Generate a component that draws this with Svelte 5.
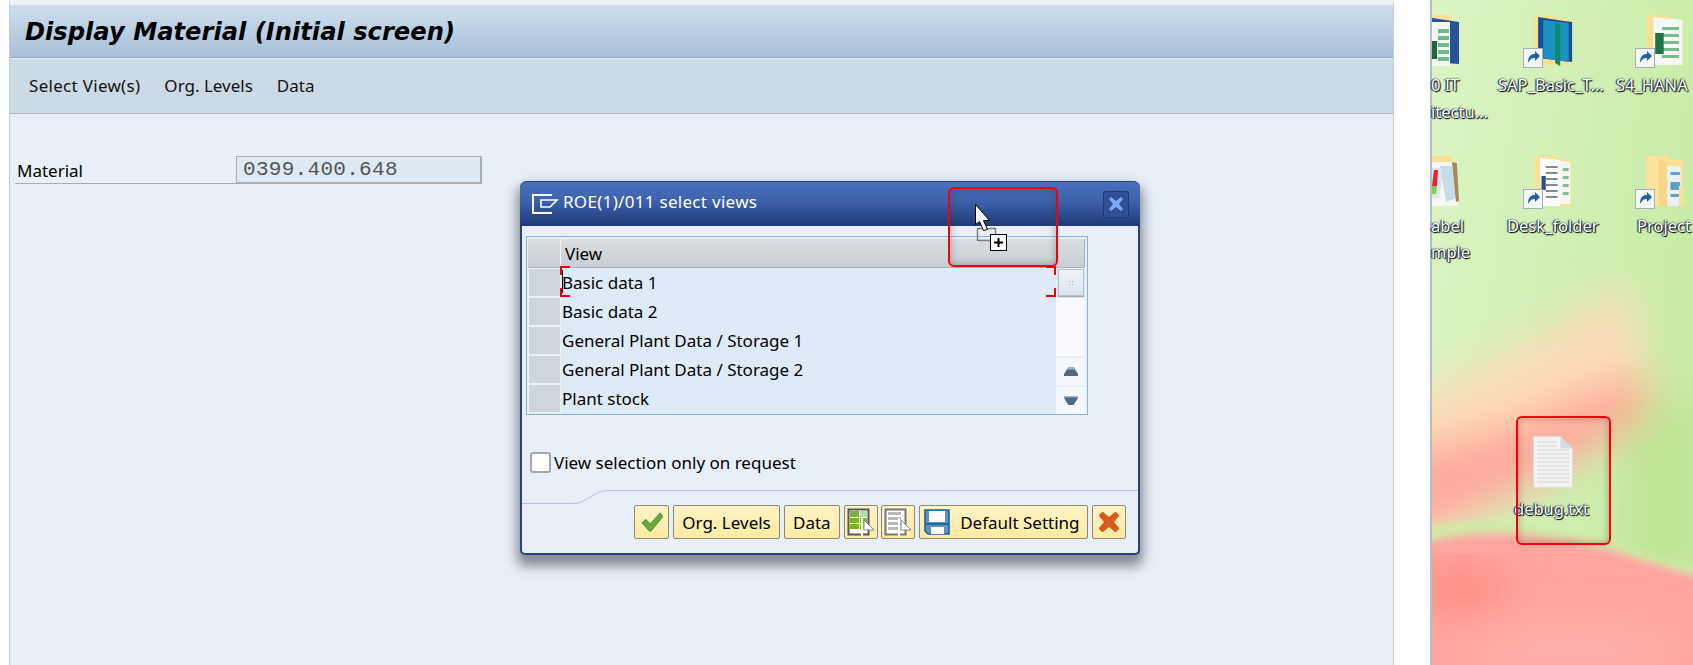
<script>
	const rows = ['Basic data 1', 'Basic data 2', 'General Plant Data / Storage 1', 'General Plant Data / Storage 2', 'Plant stock'];

	const shortcuts = [
		{ kind: 'blue', x: 1523, y: 15 },
		{ kind: 'excel', x: 1635, y: 15 },
		{ kind: 'docs', x: 1523, y: 156 },
		{ kind: 'plain', x: 1635, y: 156 }
	];

	const labels = [
		{ text: '0 IT', x: 1431, y: 73 },
		{ text: 'itectu...', x: 1431, y: 100 },
		{ text: 'SAP_Basic_T...', x: 1498, y: 73 },
		{ text: 'S4_HANA', x: 1616, y: 73 },
		{ text: 'abel', x: 1431, y: 214 },
		{ text: 'mple', x: 1431, y: 240 },
		{ text: 'Desk_folder', x: 1507, y: 214 },
		{ text: 'Project', x: 1637, y: 214 },
		{ text: 'debug.txt', x: 1514, y: 497 }
	];
</script>

{#snippet arrow()}
	<rect x="0.5" y="33.500" width="19" height="19" fill="#f4f6f9" stroke="#a9adb3" />
	<path d="M5 48c0-7 3-9 7-9v-3l5 5-5 5v-3c-3 0-5 1-7 5z" fill="#23609f" />
{/snippet}

<div class="page">
	<div class="left-strip"></div>

	<main class="sap">
		<header class="title-bar"><h1>Display Material (Initial screen)</h1></header>
		<nav class="toolbar">
			<span class="first">Select View(s)</span>
			<span>Org. Levels</span>
			<span>Data</span>
		</nav>
		<section class="content">
			<div class="field">
				<label for="material">Material</label>
				<input id="material" value="0399.400.648" readonly />
			</div>
		</section>
	</main>

	<div class="right-strip"></div>

	<aside class="desktop">
		<svg class="wallpaper" viewBox="0 0 262 665" preserveAspectRatio="none">
			<defs>
				<filter id="blur-lg"><feGaussianBlur stdDeviation="20" /></filter>
				<filter id="blur-sm"><feGaussianBlur stdDeviation="4" /></filter>
				<linearGradient id="sky" x1="0" y1="0" x2="1" y2="0.3">
					<stop offset="0" stop-color="#dcf4c4" />
					<stop offset="1" stop-color="#c9eba8" />
				</linearGradient>
			</defs>
			<rect width="262" height="665" fill="url(#sky)" />
			<g filter="url(#blur-lg)">
				<rect x="190" y="400" width="92" height="180" fill="#bfe596" />
				<path d="M-30 400 C50 370 110 330 200 285 L220 400 C160 450 80 490 20 540 L-30 560z" fill="#fbdcb8" />
				<path d="M-30 450 C50 440 120 410 190 375 L210 420 C130 470 60 510 -30 540z" fill="#ffa89c" />
				<circle cx="205" cy="395" r="16" fill="#fcb088" />
			</g>
			<path d="M-10 528 C50 515 110 520 190 545 C220 556 245 564 272 570 V580 H-10z" fill="#cfeaa6" filter="url(#blur-sm)" />
			<path d="M-10 543 C50 528 110 531 190 553 C220 563 245 571 272 578 V675 H-10z" fill="#ffa4a0" filter="url(#blur-sm)" />
			<g filter="url(#blur-lg)">
				<ellipse cx="30" cy="590" rx="50" ry="25" fill="#ff8f84" />
				<ellipse cx="140" cy="650" rx="120" ry="25" fill="#ffb0aa" />
			</g>
		</svg>
	</aside>

	<!-- desktop icons sit on a free canvas, the two left ones are cut by the window -->
	<svg class="icon" style="left:1432px;top:15px" width="28" height="52" viewBox="0 0 28 52">
		<path d="M0 0h20v8H0z" fill="#fbdf93" />
		<path d="M0 3l27 4v42L0 47z" fill="#27509f" />
		<path d="M0 7h18v44H0z" fill="#f3f6f1" />
		<path d="M6 14h11v4H6zM6 21h11v4H6zM6 28h11v4H6zM6 35h11v4H6zM6 42h11v4H6z" fill="#71b88e" />
		<rect x="0" y="26" width="5" height="18" fill="#20683a" />
	</svg>

	<svg class="icon" style="left:1432px;top:156px" width="28" height="50" viewBox="0 0 28 50">
		<path d="M0 0h20v6H0z" fill="#fbdf93" />
		<path d="M0 6h26v44H0z" fill="#f6f6f4" />
		<path d="M0 12h8l3 6-4 24H0z" fill="#d9e6ee" />
		<path d="M2 14h4l-1 16H0z" fill="#e8262a" />
		<path d="M0 30h5l-1 8H0z" fill="#8ccb46" />
		<path d="M8 10l12 0 4 32-10 4z" fill="#c6dce8" />
		<path d="M20 6l5 1 2 38-3 1z" fill="#a78a58" />
	</svg>

	{#each shortcuts as s}
		<svg class="icon" style="left:{s.x}px;top:{s.y}px" width="60" height="54" viewBox="0 0 60 54">
			<g transform="translate(10 0) scale(.85 1)">
				<path d="M2 0h26l3 4h14v46H2z" fill="#fbdf93" />
				{#if s.kind === 'blue'}
					<path d="M6 2l30 4 10 1v40l-40-4z" fill="#1d4c9b" />
					<path d="M12 5l30 3v39l-30-4z" fill="#1a92c4" />
					<path d="M26 8l6 1v42l-6-3z" fill="#0d8a6a" />
				{:else if s.kind === 'excel'}
					<path d="M10 2l34 3v45H10z" fill="#f6f7f3" />
					<path d="M20 12h20v3H20zM20 19h20v3H20zM20 26h20v3H20zM20 33h20v3H20zM20 40h20v3H20z" fill="#78bb90" />
					<rect x="12" y="18" width="10" height="21" fill="#1f7244" />
				{:else if s.kind === 'docs'}
					<path d="M18 4l26 2v42H24z" fill="#f4f6f2" />
					<path d="M8 2l24 2v46H10z" fill="#fff" />
					<path d="M35 12h7v3h-7zM35 20h7v3h-7zM35 28h7v3h-7zM35 36h7v3h-7z" fill="#82bd96" />
					<path d="M15 10h14v2H15zM15 16h14v2H15zM15 22h14v2H15zM15 28h14v2H15zM15 34h14v2H15zM15 40h14v2H15z" fill="#7f8a99" />
					<rect x="10" y="20" width="5" height="14" fill="#2b4f95" />
				{:else}
					<path d="M26 10h16v40H26z" fill="#e9f1f4" />
					<path d="M30 16h11v3H30zM30 26h11v8H30zM30 38h11v3H30z" fill="#5ba0c8" />
					<path d="M2 0h14l8 6v44H2z" fill="#fce29d" />
					<path d="M16 2l10 5v43H16z" fill="#f7d689" />
					<path d="M40 30l6 2v18H40z" fill="#fbdf93" />
				{/if}
			</g>
			{@render arrow()}
		</svg>
	{/each}

	<svg class="icon" style="left:1533px;top:436px" width="40" height="52" viewBox="0 0 40 52">
		<path d="M.5.5h27l12 12v39H.5z" fill="#f3f3f3" stroke="#dcdcdc" />
		<path d="M27.500.5v12h12z" fill="#d8dadd" />
		<path d="M4 6h20M4 10h20M4 14h32M4 18h32M4 22h32M4 26h32M4 30h32M4 34h32M4 38h32M4 42h32M4 46h32" stroke="#cfd2d6" />
	</svg>

	{#each labels as l}
		<span class="desk-label" style="left:{l.x}px;top:{l.y}px">{l.text}</span>
	{/each}

	<div class="mark debug-mark"></div>

	<!-- popup window -->
	<div class="dialog">
		<div class="dlg-title">
			<svg width="27" height="20" viewBox="0 0 27 20" fill="none" stroke="#fff" stroke-width="2">
				<path d="M20 1H1v18h19" />
				<path d="M9 6v7h9l7-7z" stroke-width="1.6" />
			</svg>
			<span>ROE(1)/011 select views</span>
			<button class="close" aria-label="Close">
				<svg width="16" height="16" viewBox="0 0 16 16"><path d="M1 3l2-2 5 4 5-4 2 2-4 5 4 5-2 2-5-4-5 4-2-2 4-5z" fill="#7fa8f6" /></svg>
			</button>
		</div>

		<div class="dlg-body">
			<div class="table">
				<div class="head-row">
					<div class="corner"></div>
					<div class="col-head">View</div>
					<div class="head-end"></div>
				</div>
				<div class="table-main">
					<div class="rows">
						{#each rows as row}
							<div class="row">
								<div class="selector"></div>
								<div class="cell">{row}</div>
							</div>
						{/each}
					</div>
					<div class="scrollbar">
						<div class="thumb"><span></span></div>
						<div class="track"></div>
						<div class="sbtn"><svg width="14" height="9" viewBox="0 0 14 9"><path d="M4.500 0h5L14 7v2H0V7z" fill="#52687c" /><path d="M4.500 0h5L11 2.500H3z" fill="#a7b4c0" /></svg></div>
						<div class="sbtn"><svg width="14" height="9" viewBox="0 0 14 9"><path d="M0 0h14v2L9.500 9h-5L0 2z" fill="#52687c" /><path d="M0 0h14v1.500H0z" fill="#a7b4c0" /></svg></div>
					</div>
				</div>
			</div>

			<div class="check-row">
				<span class="box"></span>
				<span>View selection only on request</span>
			</div>
		</div>

		<svg class="sep" width="616" height="16" viewBox="0 0 616 16" fill="none">
			<path d="M0 14.500H52C64 14.500 72 1.500 86 1.500H616" stroke="#b3c3d6" />
		</svg>

		<div class="actions">
			<button class="btn enter" aria-label="Enter">
				<svg width="22" height="20" viewBox="0 0 24 22"><path d="M1 12l4-4 5 5L21 1l3 4-13 16h-2z" fill="#6aa63a" stroke="#4d8a3a" /></svg>
			</button>
			<button class="btn org">Org. Levels</button>
			<button class="btn data">Data</button>
			<button class="btn square" aria-label="Select all">
				<svg width="28" height="28" viewBox="0 0 28 28">
					<rect x="1.500" y="1.500" width="20" height="25" fill="#fff" stroke="#555" stroke-width="2" />
					<path d="M3 3h9v6H3zM3 10h9v5H3zM3 16h9v5H3zM13 10h7v5h-7zM13 16h7v5h-7z" fill="#76b52a" />
					<path d="M13 3h7v6h-7z" fill="#b8dca0" />
					<path d="M15 10v18" stroke="#fff" stroke-width="2" />
					<path d="M17 12l10 10H17z" fill="#fff" stroke="#888" />
				</svg>
			</button>
			<button class="btn square" aria-label="Deselect all">
				<svg width="28" height="28" viewBox="0 0 28 28">
					<rect x="1.500" y="1.500" width="20" height="25" fill="#fff" stroke="#777" stroke-width="2" />
					<path d="M4 4h13v3H4zM4 9h13v3H4zM4 14h13v3H4zM4 19h13v3H4z" fill="#b9b9b9" />
					<path d="M15 10v18" stroke="#fff" stroke-width="2" />
					<path d="M17 12l10 10H17z" fill="#fff" stroke="#888" />
				</svg>
			</button>
			<button class="btn default">
				<svg width="26" height="26" viewBox="0 0 26 26">
					<path d="M1 1h24v24H4l-3-3z" fill="#5f93bd" stroke="#1b6a9c" stroke-width="1.600" />
					<path d="M5 2h16v11H5z" fill="#fff" />
					<path d="M7 18h13v7H7z" fill="#fff" />
					<path d="M1 15h24" stroke="#1b6a9c" stroke-width="2" />
				</svg>
				<span>Default Setting</span>
			</button>
			<button class="btn square" aria-label="Cancel">
				<svg width="20" height="20" viewBox="0 0 20 20"><path d="M0 3l3-3h1l6 5 6-5h1l3 3v1l-5 6 5 6v1l-3 3h-1l-6-5-6 5H3l-3-3v-1l5-6-5-6z" fill="#d85a1e" /></svg>
			</button>
		</div>
	</div>

	<!-- annotations over the popup -->
	<i class="bracket lt"></i>
	<i class="bracket rt"></i>
	<i class="caret"></i>
	<div class="mark view-mark"></div>
	<svg class="cursor" width="34" height="48" viewBox="0 0 34 48">
		<rect x="2.500" y="24.500" width="18" height="12" fill="none" stroke="#fff" stroke-width="1.500" />
		<rect x="2.500" y="24.500" width="18" height="12" fill="none" stroke="#000" stroke-width="1.500" stroke-dasharray="1 1" />
		<path d="M.5.5v20l4-3 4 9 4-1-4-9h6z" fill="#fff" stroke="#000" />
		<rect x="15.500" y="30.500" width="16" height="16" fill="#fff" stroke="#000" />
		<path d="M23.500 34v9M19 38.500h9" stroke="#000" stroke-width="2" />
	</svg>
</div>

<style>
	:global(body) {
		margin: 0;
		background: #fff;
	}

	.page {
		position: relative;
		display: flex;
		width: 1693px;
		height: 665px;
		overflow: hidden;
		font-family: 'Noto Sans', 'DejaVu Sans', sans-serif;
		font-size: 17px;
		color: #000;
	}

	.left-strip {
		width: 9px;
		flex: none;
		background: #fff;
	}

	.sap {
		width: 1385px;
		flex: none;
		display: flex;
		flex-direction: column;
		background: #e8eff7;
		border-top: 5px solid #eef2f7;
		border-left: 1px solid #c4ced9;
		border-right: 1px solid #c4ced9;
		box-sizing: border-box;
	}

	.title-bar {
		height: 53px;
		flex: none;
		box-sizing: border-box;
		padding: 2px 0 0 15px;
		display: flex;
		align-items: center;
		background: linear-gradient(#cedeed, #a9c0d8);
		border-bottom: 1px solid #99aabb;
	}

	h1 {
		margin: 0;
		font-family: 'DejaVu Sans', sans-serif;
		font-size: 24.2px;
		font-weight: 700;
		font-style: italic;
		white-space: nowrap;
	}

	.toolbar {
		height: 56px;
		flex: none;
		box-sizing: border-box;
		padding: 0 0 2px 19px;
		display: flex;
		align-items: center;
		gap: 24px;
		background: #ccdae6;
		border-top: 1px solid #e4ecf3;
		border-bottom: 1px solid #aab6c3;
		color: #111;
	}

	.first {
		letter-spacing: 0.3px;
	}

	.content {
		flex: 1;
		padding: 42px 0 0 5px;
	}

	.field {
		display: flex;
		align-items: flex-end;
		width: 467px;
	}

	label {
		width: 221px;
		height: 27px;
		box-sizing: border-box;
		padding-left: 2px;
		border-bottom: 1px solid #a5acb4;
		line-height: 28px;
	}

	input {
		width: 246px;
		height: 28px;
		box-sizing: border-box;
		margin: 0;
		padding: 0 0 0 6px;
		background: #deeaf3;
		border: 2px solid #a9aeb3;
		border-width: 1px 2px 2px 1px;
		font-family: 'Liberation Mono', monospace;
		font-size: 21px;
		letter-spacing: 0.3px;
		color: #555;
		outline: none;
	}

	.right-strip {
		width: 36px;
		flex: none;
		background: #fff;
	}

	.desktop {
		flex: 1;
		border-left: 2px solid #b4bfcc;
		position: relative;
	}

	.wallpaper {
		position: absolute;
		inset: 0;
		width: 100%;
		height: 100%;
		display: block;
	}

	.icon {
		position: absolute;
		display: block;
	}

	.desk-label {
		position: absolute;
		font-family: 'Noto Sans', sans-serif;
		font-size: 16.5px;
		line-height: 24px;
		color: #fff;
		white-space: nowrap;
		text-shadow: 1px 1px 1px #000, -1px 0 1px #12264d, 0 0 2px #1a2a50;
	}

	.mark {
		position: absolute;
		box-sizing: border-box;
		border: 2px solid #f4000a;
		border-radius: 6px;
	}

	.debug-mark {
		left: 1516px;
		top: 416px;
		width: 95px;
		height: 129px;
		box-shadow: inset 0 0 7px rgba(70, 70, 70, 0.4);
	}

	.view-mark {
		left: 948px;
		top: 187px;
		width: 110px;
		height: 80px;
		box-shadow: inset 0 0 9px rgba(60, 60, 60, 0.4);
	}

	.dialog {
		position: absolute;
		left: 520px;
		top: 181px;
		width: 620px;
		height: 374px;
		box-sizing: border-box;
		display: flex;
		flex-direction: column;
		background: #e8eff7;
		border: 2px solid #2a4278;
		border-top: 0;
		border-radius: 7px 7px 5px 5px;
		box-shadow: 0 8px 12px 3px rgba(50, 55, 60, 0.55);
	}

	.dlg-title {
		height: 45px;
		flex: none;
		margin: 0 -2px;
		padding: 0 11px 0 12px;
		display: flex;
		align-items: center;
		gap: 4px;
		background: linear-gradient(#4a70bd 0, #3d60aa 45%, #1e3976 100%);
		border-top: 1px solid #2a4278;
		border-radius: 7px 7px 0 0;
		box-sizing: border-box;
		color: #fff;
		letter-spacing: 0.3px;
	}

	.dlg-title span {
		flex: 1;
		margin-top: -5px;
	}

	.close {
		width: 26px;
		height: 27px;
		padding: 0;
		display: grid;
		place-items: center;
		background: #2f5095;
		border: 1px solid #1f3a70;
		border-radius: 2px;
	}

	.dlg-body {
		flex: 1;
		padding: 10px 0 0 4px;
	}

	.table {
		width: 562px;
		height: 179px;
		box-sizing: border-box;
		border: 1px solid #8fb0cf;
		padding: 2px 2px 0 1px;
		display: flex;
		flex-direction: column;
	}

	.head-row {
		display: flex;
		height: 28px;
		flex: none;
		border: 1px solid #a9b2bc;
		border-width: 0 1px 1px 0;
		background: linear-gradient(#d9dee3, #c9ced4);
	}

	.corner {
		width: 33px;
		border-right: 1px solid #f2f5f8;
		box-sizing: border-box;
	}

	.col-head {
		flex: 1;
		padding-left: 4px;
		line-height: 30px;
	}

	.head-end {
		width: 30px;
	}

	.table-main {
		display: flex;
		flex: 1;
	}

	.rows {
		flex: 1;
		background: #deeaf5;
	}

	.row {
		display: flex;
		height: 29px;
	}

	.selector {
		width: 33px;
		flex: none;
		box-sizing: border-box;
		background: #cfd5dc;
		border: 1px solid #eef2f6;
	}

	.cell {
		padding-left: 1px;
		line-height: 30px;
		white-space: nowrap;
	}

	.scrollbar {
		width: 29px;
		flex: none;
		display: flex;
		flex-direction: column;
		gap: 2px;
		background: #e8eff7;
	}

	.thumb {
		height: 25px;
		margin: 1px 1px 0 2px;
		display: grid;
		place-items: center;
		border: 1px solid #b6c0ca;
		box-shadow: 0 1px 1px #aab;
		background: linear-gradient(#eef3f7, #dbe5ee);
	}

	.thumb span {
		width: 6px;
		height: 6px;
		background: radial-gradient(circle, #a9b3bd 1px, transparent 1px) 0 0 / 3px 3px;
	}

	.track {
		height: 58px;
		background: #f8fafd;
	}

	.sbtn {
		height: 27px;
		display: grid;
		place-items: center;
		background: #f4f7fb;
	}

	.check-row {
		margin-top: 36px;
		display: flex;
		align-items: center;
		gap: 3px;
		padding-left: 4px;
	}

	.box {
		width: 21px;
		height: 21px;
		box-sizing: border-box;
		background: #fff;
		border: 2px solid #a4a8ad;
		border-radius: 3px;
	}

	.sep {
		display: block;
		flex: none;
	}

	.actions {
		height: 48px;
		flex: none;
		box-sizing: border-box;
		padding: 0 12px 0 0;
		display: flex;
		justify-content: flex-end;
		gap: 3.8px;
		align-items: flex-start;
	}

	.btn {
		height: 34px;
		padding: 0;
		display: flex;
		align-items: center;
		justify-content: center;
		box-sizing: border-box;
		font: inherit;
		background: linear-gradient(#fff4c4, #fde9a3);
		border: 1px solid #8c8a72;
		border-radius: 2px;
		color: #000;
	}

	.square {
		width: 34px;
	}

	.enter {
		width: 35px;
	}

	.org {
		width: 107px;
	}

	.data {
		width: 56px;
	}

	.default {
		width: 169px;
		justify-content: flex-start;
		padding-left: 4px;
		gap: 10px;
	}

	.bracket {
		position: absolute;
		box-sizing: border-box;
		width: 10px;
		height: 31px;
		border: solid #e8000c;
		border-width: 2px 0;
	}

	.bracket::before,
	.bracket::after {
		content: '';
		position: absolute;
		width: 2px;
		height: 7px;
		background: #e8000c;
	}

	.bracket::before {
		top: 0;
	}

	.bracket::after {
		bottom: 0;
	}

	.lt {
		left: 560px;
		top: 266px;
	}

	.rt {
		left: 1046px;
		top: 266px;
	}

	.rt::before,
	.rt::after {
		right: 0;
	}

	.caret {
		position: absolute;
		left: 562px;
		top: 270px;
		width: 1px;
		height: 23px;
		background: #111;
	}

	.cursor {
		position: absolute;
		left: 975px;
		top: 204px;
	}
</style>
